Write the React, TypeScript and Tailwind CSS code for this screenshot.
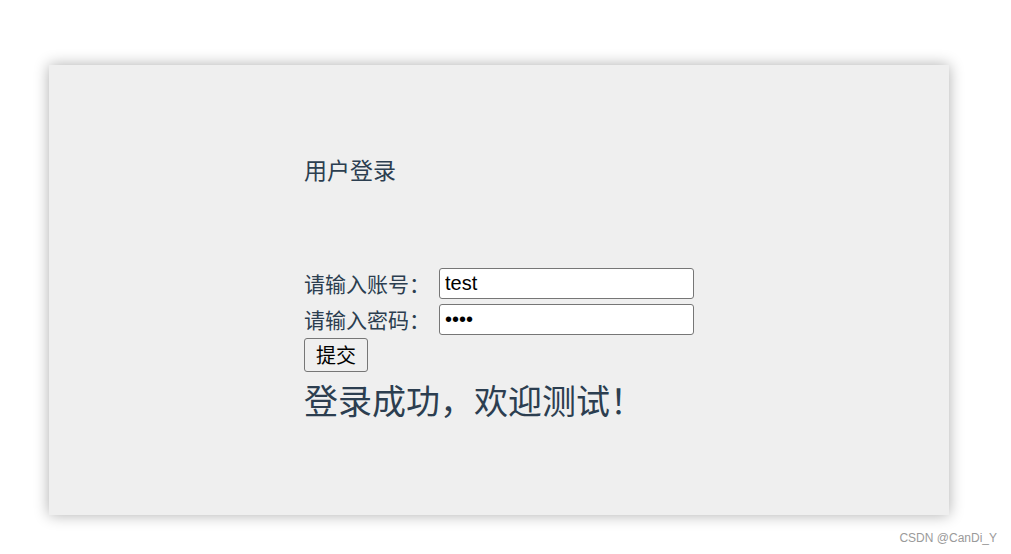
import React from "react";

const cjk = "font-['Microsoft_YaHei','Noto_Sans_CJK_SC',sans-serif]";
const field =
  "h-[31px] w-[255px] rounded-[3px] border border-[#767676] bg-white px-[5px] font-['Liberation_Sans',Arial,sans-serif] text-[20px] text-black outline-none";

export default function App() {
  return (
    <div className="relative h-[554px] w-full overflow-hidden bg-white">
      <div className="pt-[65px] pl-[49px]">
        <div className="flex h-[450px] w-[900px] flex-col bg-[#efefef] pt-[88px] pl-[255px] shadow-[0_0_14px_rgba(0,0,0,0.32)]">
          <h3 className={`${cjk} text-[23px] leading-[32px] text-[#2c3e50]`}>用户登录</h3>

          <form className="mt-[83px] flex flex-col" onSubmit={(e) => e.preventDefault()}>
            <div className="flex h-[31px] items-center">
              <label className={`${cjk} w-[135px] text-[21px] leading-[29px] text-[#2c3e50]`}>请输入账号：</label>
              <input type="text" defaultValue="test" className={field} />
            </div>
            <div className="mt-[5px] flex h-[31px] items-center">
              <label className={`${cjk} w-[135px] text-[21px] leading-[29px] text-[#2c3e50]`}>请输入密码：</label>
              <input type="password" defaultValue="1234" className={field} />
            </div>
            <div className="mt-[3px]">
              <button
                type="submit"
                className={`${cjk} h-[34px] w-[64px] rounded-[3px] border border-[#767676] bg-[#efefef] text-[20px] leading-[32px] text-black`}
              >
                提交
              </button>
            </div>
          </form>

          <h2 className={`${cjk} mt-[8px] text-[34px] leading-[40px] text-[#2c3e50]`}>登录成功，欢迎测试！</h2>
        </div>
      </div>

      <div className="absolute right-[14px] top-[531px] font-['Liberation_Sans',Arial,sans-serif] text-[12px] leading-[14px] text-[#9a9a9a]">
        CSDN @CanDi_Y
      </div>
    </div>
  );
}
